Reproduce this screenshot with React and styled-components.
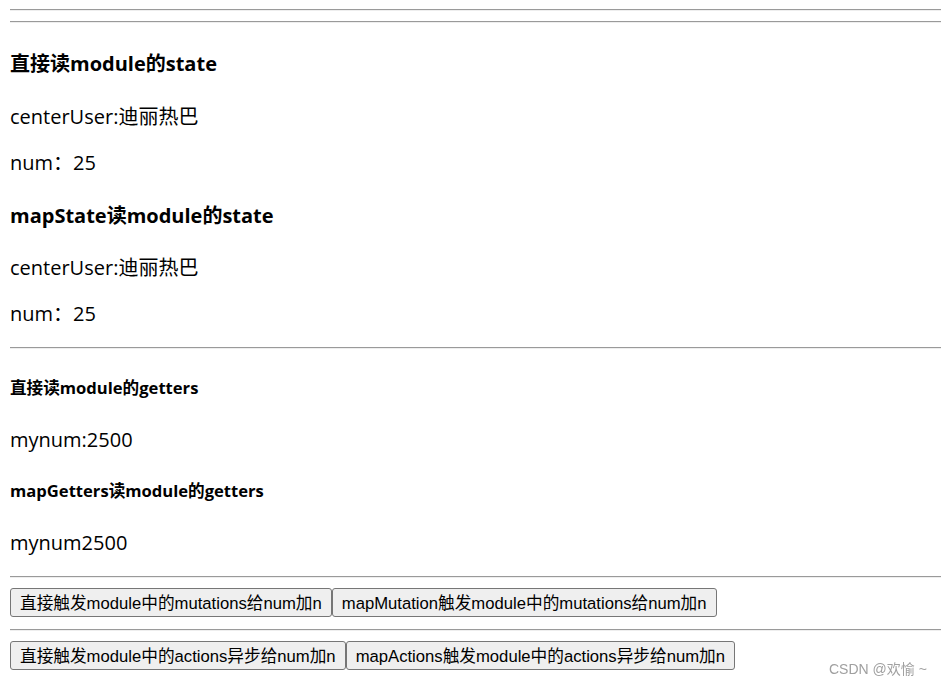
import React from "react";
import styled, { createGlobalStyle } from "styled-components";

const Global = createGlobalStyle`
  html, body { margin: 0; padding: 0; background: #fff; }
  body { font-family: "Open Sans", "Noto Sans CJK SC", sans-serif; color: #000; }
`;

const Page = styled.div`
  display: flow-root;
  padding-left: 10px;
`;

const Rule = styled.hr`
  margin: 10px 0;
  height: 0;
  border: 0;
  border-top: 1px solid #9a9a9a;
  border-bottom: 1px solid #eeeeee;
  &:first-child { margin-top: 9px; }
`;

const Heading = styled.h4`
  font-family: "Open Sans", "Noto Sans CJK SC", sans-serif;
  font-weight: 700;
  font-size: ${(p) => (p.$small ? "16.6px" : "20px")};
  line-height: ${(p) => (p.$small ? "22px" : "26px")};
  margin: ${(p) => (p.$small ? "27.7px 0" : "26.6px 0")};
  ${(p) => (p.$lead ? "margin-top: 28.4px;" : "")}
`;

const Text = styled.p`
  font-size: 20px;
  line-height: 26px;
  margin: 20px 0;
`;

const ButtonRow = styled.div`
  display: flex;
  align-items: flex-start;
  height: 31px;
`;

const Button = styled.button`
  font-family: "Liberation Sans", Arial, "Noto Sans CJK SC", sans-serif;
  font-size: 16.67px;
  height: 29px;
  padding: 0 9px;
  margin: 0;
  background: #efefef;
  color: #000;
  border: 1px solid #767676;
  border-radius: 3px;
  white-space: nowrap;
`;

const Watermark = styled.div`
  position: fixed;
  left: 829px;
  top: 658px;
  font-family: "Liberation Sans", Arial, "Noto Sans CJK SC", sans-serif;
  font-size: 14px;
  color: #a0a0a0;
  white-space: nowrap;
`;

export default function App() {
  return (
    <>
      <Global />
      <Page>
        <Rule />
        <Rule />
        <Heading $lead>直接读module的state</Heading>
        <Text>centerUser:迪丽热巴</Text>
        <Text>num：25</Text>
        <Heading>mapState读module的state</Heading>
        <Text>centerUser:迪丽热巴</Text>
        <Text>num：25</Text>
        <Rule />
        <Heading as="h5" $small>直接读module的getters</Heading>
        <Text>mynum:2500</Text>
        <Heading as="h5" $small>mapGetters读module的getters</Heading>
        <Text>mynum2500</Text>
        <Rule />
        <ButtonRow>
          <Button>直接触发module中的mutations给num加n</Button>
          <Button>mapMutation触发module中的mutations给num加n</Button>
        </ButtonRow>
        <Rule />
        <ButtonRow>
          <Button>直接触发module中的actions异步给num加n</Button>
          <Button>mapActions触发module中的actions异步给num加n</Button>
        </ButtonRow>
      </Page>
      <Watermark>CSDN @欢愉 ~</Watermark>
    </>
  );
}
